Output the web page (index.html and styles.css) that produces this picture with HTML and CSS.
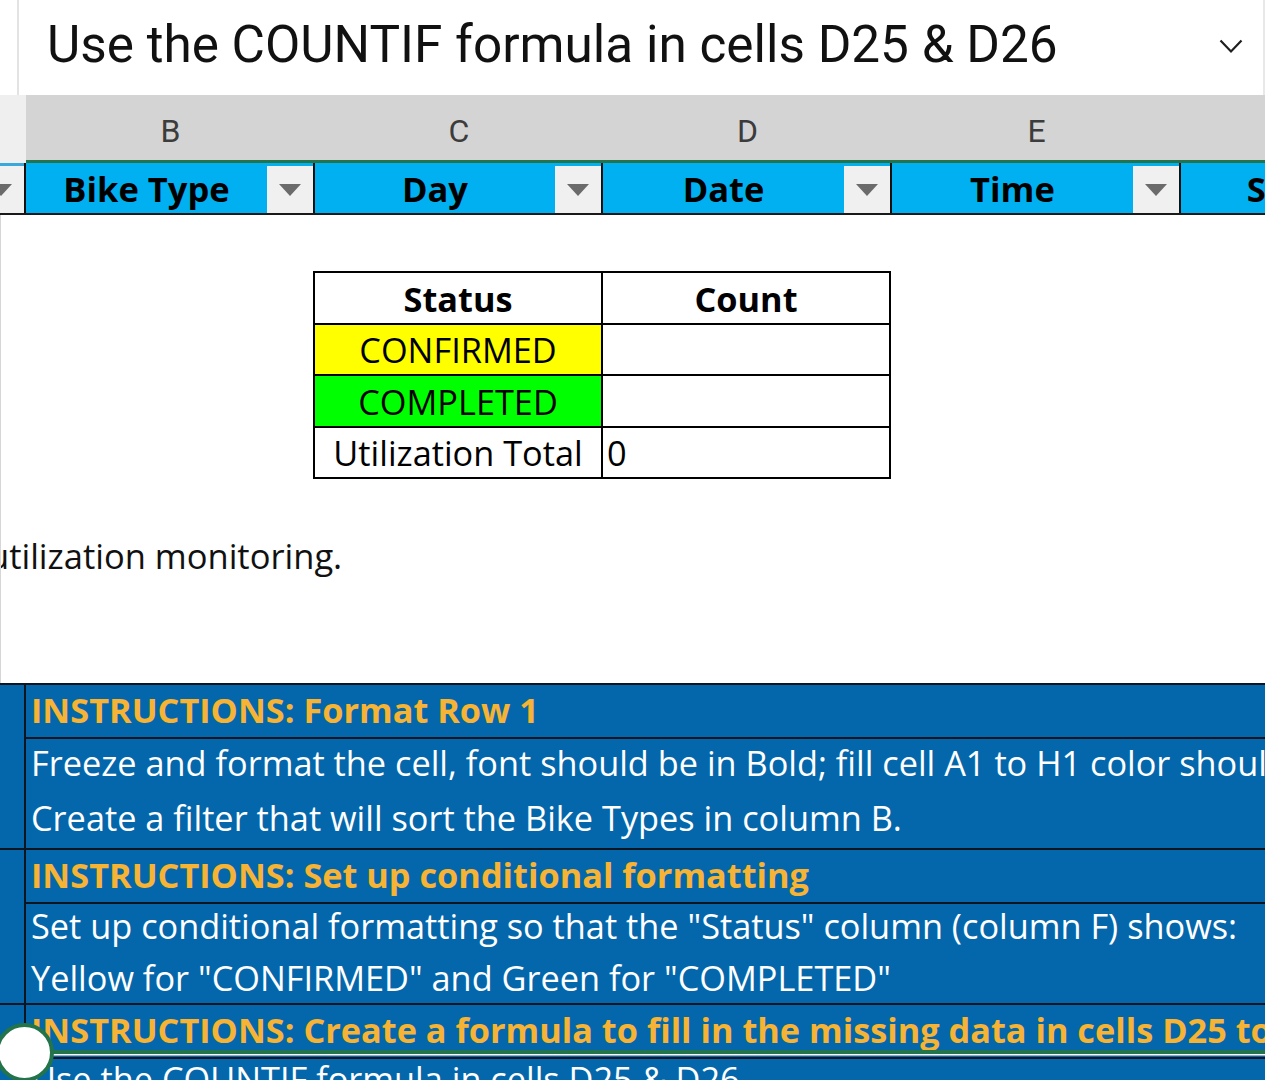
FILE: index.html
```html
<!DOCTYPE html>
<html>
<head>
<meta charset="utf-8">
<title>Sheet</title>
<link rel="stylesheet" href="styles.css">
</head>
<body>
<div class="screen">
  <div class="fbar">
    <div class="fbar-gutter"></div>
    <div class="fbar-main">
      <span class="fbar-text">Use the COUNTIF formula in cells D25 &amp; D26</span>
      <svg class="chev" viewBox="0 0 24 15" width="24" height="15"><polyline points="1.5,1.5 12,12.5 22.5,1.5" fill="none" stroke="#1f1f1f" stroke-width="2.2"/></svg>
    </div>
  </div>

  <div class="colhead">
    <div class="corner"></div>
    <div class="letter">B</div>
    <div class="letter">C</div>
    <div class="letter">D</div>
    <div class="letter">E</div>
    <div class="letter"></div>
  </div>

  <div class="row1">
    <div class="hcell hcell-a"><div class="fbtn"><span class="tri"></span></div></div>
    <div class="hcell"><span class="hlabel">Bike Type</span><div class="fbtn"><span class="tri"></span></div></div>
    <div class="hcell"><span class="hlabel">Day</span><div class="fbtn"><span class="tri"></span></div></div>
    <div class="hcell"><span class="hlabel">Date</span><div class="fbtn"><span class="tri"></span></div></div>
    <div class="hcell"><span class="hlabel">Time</span><div class="fbtn"><span class="tri"></span></div></div>
    <div class="hcell"><span class="hlabel">Status</span><div class="fbtn"><span class="tri"></span></div></div>
  </div>

  <div class="white">
    <div class="sumtable">
      <div class="sc bold">Status</div>
      <div class="sc bold">Count</div>
      <div class="sc yellow">CONFIRMED</div>
      <div class="sc"></div>
      <div class="sc green">COMPLETED</div>
      <div class="sc"></div>
      <div class="sc">Utilization Total</div>
      <div class="sc left">0</div>
    </div>
    <div class="note">utilization monitoring.</div>
  </div>

  <div class="instr">
    <div class="group">
      <div class="gutter"></div>
      <div class="rows">
        <div class="ihead">INSTRUCTIONS: Format Row 1</div>
        <div class="ibody ibody-1">
          <div class="lines">
            <div>Freeze and format the cell, font should be in Bold; fill cell A1 to H1 color should be Light Blue.</div>
            <div>Create a filter that will sort the Bike Types in column B.</div>
          </div>
        </div>
      </div>
    </div>
    <div class="group">
      <div class="gutter"></div>
      <div class="rows">
        <div class="ihead">INSTRUCTIONS: Set up conditional formatting</div>
        <div class="ibody ibody-2">
          <div class="lines">
            <div>Set up conditional formatting so that the "Status" column (column F) shows:</div>
            <div>Yellow for "CONFIRMED" and Green for "COMPLETED"</div>
          </div>
        </div>
      </div>
    </div>
    <div class="group group-last">
      <div class="gutter"></div>
      <div class="rows">
        <div class="ihead">INSTRUCTIONS: Create a formula to fill in the missing data in cells D25 to D26</div>
        <div class="ibody ibody-3">
          <div class="lines">
            <div>Use the COUNTIF formula in cells D25 &amp; D26</div>
          </div>
        </div>
      </div>
    </div>
  </div>

  <div class="selection"></div>
  <div class="handle"></div>
</div>
</body>
</html>
```
FILE: styles.css
```css
html, body {
  margin: 0;
  padding: 0;
  background: #ffffff;
}

.screen {
  position: relative;
  width: 1265px;
  height: 1080px;
  overflow: hidden;
  font-family: "Open Sans", "Noto Sans", sans-serif;
  color: #111;
}

/* Formula bar */
.fbar {
  display: flex;
  height: 95px;
  background: #fff;
}
.fbar-gutter {
  width: 17px;
  border-right: 2px solid #e3e3e3;
}
.fbar-main {
  flex: 1;
  display: flex;
  align-items: center;
  padding: 0 20px 6px 28px;
  border-right: 2px solid #e8e8e8;
  font-family: Roboto, "Liberation Sans", sans-serif;
  font-size: 51.3px;
  color: #111;
}
.fbar-text {
  flex: 1;
  white-space: nowrap;
}
.chev {
  flex-shrink: 0;
  margin-top: 4px;
}

/* Column headers */
.colhead {
  display: grid;
  grid-template-columns: 26px 289px 288px 289px 289px 289px;
  height: 68px;
}
.corner {
  background: #efefef;
}
.letter {
  background: #d4d4d4;
  border-bottom: 3px solid #24734a;
  display: flex;
  align-items: center;
  justify-content: center;
  padding-top: 6px;
  font-family: Roboto, "Liberation Sans", sans-serif;
  font-size: 32px;
  color: #3c3c3c;
}

/* Row 1 table header */
.row1 {
  display: grid;
  grid-template-columns: 26px 289px 288px 289px 289px 289px;
  height: 50px;
  border-bottom: 2px solid #1a1a1a;
}
.hcell {
  display: flex;
  background: #00b0f0;
  border-right: 2px solid #111;
  overflow: hidden;
}
.hcell-a {
  justify-content: flex-end;
  background: #3aa8dc;
}
.hlabel {
  flex: 1;
  text-align: center;
  font-weight: 700;
  font-size: 34.5px;
  line-height: 52px;
  color: #000;
  white-space: nowrap;
}
.fbtn {
  flex-shrink: 0;
  width: 46px;
  height: 47px;
  margin-top: 3px;
  background: #f0f0f0;
  display: flex;
  align-items: center;
  justify-content: center;
}
.tri {
  width: 0;
  height: 0;
  border-left: 11px solid transparent;
  border-right: 11px solid transparent;
  border-top: 12px solid #6b6b6b;
}

/* White area */
.white {
  height: 468px;
  border-left: 1px solid #d6d6d6;
  overflow: hidden;
}
.sumtable {
  display: grid;
  grid-template-columns: 286px 286px;
  grid-template-rows: 50px 49px 50px 49px;
  gap: 2px;
  padding: 2px;
  background: #000;
  width: max-content;
  margin: 56px 0 0 312px;
}
.sc {
  background: #fff;
  display: flex;
  align-items: center;
  justify-content: center;
  font-size: 34.3px;
  color: #000;
  white-space: nowrap;
}
.sc.bold { font-weight: 700; }
.sc.yellow { background: #ffff00; }
.sc.green { background: #00ff00; }
.sc.left { justify-content: flex-start; padding-left: 4px; }

.note {
  margin: 57px 0 0 -13px;
  font-size: 34.5px;
  line-height: 40px;
  white-space: nowrap;
  color: #111;
}

/* Instructions block */
.instr {
  background: #0467ab;
  color: #fff;
  height: 400px;
}
.group {
  display: flex;
  border-top: 2px solid #0d1620;
}
.gutter {
  flex-shrink: 0;
  width: 24px;
  border-right: 2px solid #0d1620;
}
.group-last {
  height: 400px;
}
.rows {
  flex: 1;
  min-width: 0;
}
.ihead {
  height: 52px;
  line-height: 50px;
  font-size: 34.3px;
  font-weight: 700;
  color: #f6b334;
  padding-left: 5px;
  white-space: nowrap;
  overflow: hidden;
}
.ibody {
  border-top: 2px solid #0d1620;
  font-size: 34.3px;
  padding-left: 5px;
  white-space: nowrap;
  overflow: hidden;
}
.ibody-1 { height: 109px; line-height: 55px; }
.ibody-2 { height: 99px; line-height: 52px; }
.ibody-3 { height: 100px; line-height: 52px; }
.lines { margin-top: -4px; }
.ibody-3 .lines { margin-top: -6px; }

/* Selection overlay */
.selection {
  position: absolute;
  left: 26px;
  top: 1050px;
  width: 1400px;
  height: 120px;
  border: 4px solid #23744a;
  box-shadow: inset 0 0 0 1.5px #ffffff;
}
.handle {
  position: absolute;
  left: -5px;
  top: 1023px;
  width: 51px;
  height: 51px;
  border: 4px solid #23744a;
  border-radius: 50%;
  background: #fff;
}
```
